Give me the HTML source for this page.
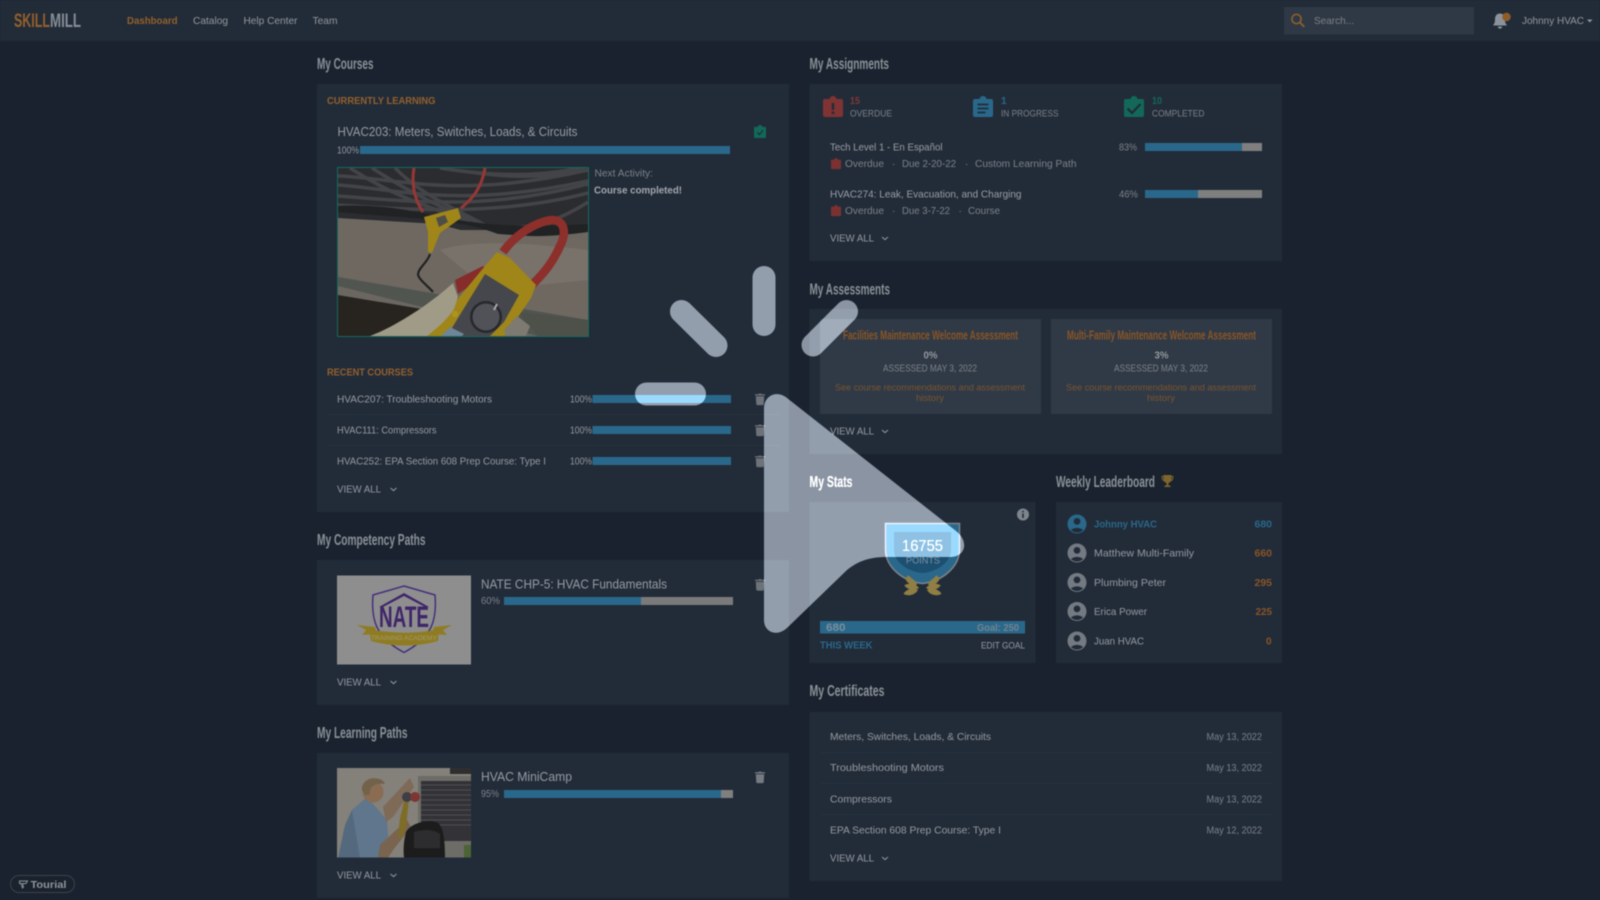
<!DOCTYPE html>
<html lang="en"><head><meta charset="utf-8"><title>SkillMill Dashboard</title>
<style>
html,body{margin:0;padding:0;width:1600px;height:900px;overflow:hidden;background:#19222e}
svg{display:block;filter:blur(.45px)}
text{font-family:"Liberation Sans",Arial,sans-serif;fill:#93989f;font-size:10px;white-space:pre}
.h{font-size:16px;font-weight:700;fill:#8b9198}
.o{font-weight:700;fill:#93602d}
.n{font-size:12.5px;fill:#969ba2}
.t{fill:#969aa1;font-size:10.5px}
.m{fill:#7b8189;font-size:10px}
.a{font-weight:700;font-size:13px;fill:#8a5527}
.l{fill:#7a5330;font-size:9.5px}
.ov{mix-blend-mode:plus-lighter;fill:#717274}
</style></head><body>
<svg width="1600" height="900" viewBox="0 0 1600 900" xmlns="http://www.w3.org/2000/svg">
<defs>
<path id="clip" d="M2 3h4.600a3.400 3 0 0 1 6.800 0H18a2 2 0 0 1 2 2v14a2 2 0 0 1-2 2H2a2 2 0 0 1-2-2V5a2 2 0 0 1 2-2z"/>
<path id="trash" d="M3.500 1.200V.6h3v.6H10v1.300H0V1.200zM.8 3.300h8.400l-.5 8a1 1 0 0 1-1 .8H2.300a1 1 0 0 1-1-.8z"/>
<path id="chev" d="M0 0l3 2.600L6 0" fill="none" stroke="#8a9097" stroke-width="1.100"/>
<g id="user"><circle r="9.500" fill="#747a82"/><circle cy="-2.600" r="3.400" fill="#222c39"/><path d="M-6 6a7.500 5.200 0 0 1 12 0a8.400 8.400 0 0 1-12 0z" fill="#222c39"/></g>
<path id="leaf" d="M0 0c4-4 11-4 15 0c-4 4-11 4-15 0z"/>
<clipPath id="c1"><rect x="338" y="168" width="250" height="168"/></clipPath>
<clipPath id="c2"><rect x="337" y="768" width="134" height="89.500"/></clipPath>
</defs>

<rect width="1600" height="900" fill="#19222e"/>

<!-- Nav -->
<rect width="1600" height="41" fill="#222c38"/>
<text x="14" y="27" textLength="36" lengthAdjust="spacingAndGlyphs" style="font-size:19.500px;font-weight:700;fill:#96602b">SKILL</text>
<text x="50" y="27" textLength="31" lengthAdjust="spacingAndGlyphs" style="font-size:19.500px;font-weight:700;fill:#868d96">MILL</text>
<text x="127" y="24" textLength="50.500" lengthAdjust="spacingAndGlyphs" style="font-size:10.500px;fill:#93602d;font-weight:700">Dashboard</text>
<text x="193" y="24" textLength="35" lengthAdjust="spacingAndGlyphs" style="font-size:10.500px">Catalog</text>
<text x="243.500" y="24" textLength="54" lengthAdjust="spacingAndGlyphs" style="font-size:10.500px">Help Center</text>
<text x="312.500" y="24" textLength="25" lengthAdjust="spacingAndGlyphs" style="font-size:10.500px">Team</text>
<rect x="1284" y="7" width="190" height="27.500" fill="#2f3945"/>
<circle cx="1296.500" cy="19" r="4.600" fill="none" stroke="#93602d" stroke-width="1.500"/><path d="M1300 22.600l3.700 3.700" stroke="#93602d" stroke-width="1.800" stroke-linecap="round"/>
<text x="1314" y="24" textLength="40" lengthAdjust="spacingAndGlyphs" class="m" style="font-size:10.500px">Search...</text>
<path d="M1500 13.500c-3.600 0-5 2.600-5 6c0 3.500-1 4.500-2 6h14c-1-1.500-2-2.500-2-6c0-3.400-1.400-6-5-6zM1497.800 26.500a2.200 2.200 0 0 0 4.400 0z" fill="#8b929a"/>
<circle cx="1506.500" cy="17" r="4.200" fill="#8f5c28"/>
<text x="1522" y="24" textLength="62" lengthAdjust="spacingAndGlyphs" style="font-size:10.500px">Johnny HVAC</text>
<path d="M1587 19.500h5.500l-2.750 3z" fill="#8f959c"/>

<!-- Panels -->
<g fill="#222c39">
<rect x="317" y="84" width="472" height="428"/>
<rect x="317" y="560" width="472" height="145"/>
<rect x="317" y="753" width="472" height="145"/>
<rect x="809.500" y="84" width="472.500" height="177"/>
<rect x="809.500" y="309" width="472.500" height="145"/>
<rect x="809.500" y="502" width="226" height="161"/>
<rect x="1056" y="502" width="226" height="161"/>
<rect x="809.500" y="712" width="472.500" height="169"/>
</g>

<!-- Titles -->
<text class="h" x="317" y="69" textLength="56.500" lengthAdjust="spacingAndGlyphs">My Courses</text>
<text class="h" x="809.500" y="69" textLength="79.500" lengthAdjust="spacingAndGlyphs">My Assignments</text>
<text class="h" x="809.500" y="294.500" textLength="80.500" lengthAdjust="spacingAndGlyphs">My Assessments</text>
<text class="h" x="809.500" y="487" textLength="43" lengthAdjust="spacingAndGlyphs" style="fill:#fff">My Stats</text>
<text class="h" x="1056" y="487" textLength="99" lengthAdjust="spacingAndGlyphs">Weekly Leaderboard</text>
<text class="h" x="809.500" y="696" textLength="75" lengthAdjust="spacingAndGlyphs">My Certificates</text>
<text class="h" x="317" y="545" textLength="108.500" lengthAdjust="spacingAndGlyphs">My Competency Paths</text>
<text class="h" x="317" y="738" textLength="90.500" lengthAdjust="spacingAndGlyphs">My Learning Paths</text>
<path d="M1163.500 475h8v3.500c0 2.500-1.200 4-3 4.500v2.500h2v1.500h-6v-1.500h2V483c-1.800-.5-3-2-3-4.500z" fill="#7d652d"/>
<path d="M1163.500 476.500h-1.500c0 2.500 1 4 2.500 4.500M1171.500 476.500h1.500c0 2.500-1 4-2.500 4.500" fill="none" stroke="#7d652d"/>

<!-- My Courses -->
<text class="o" x="327" y="104" textLength="108.500" lengthAdjust="spacingAndGlyphs">CURRENTLY LEARNING</text>
<text class="n" x="337.500" y="136" textLength="240" lengthAdjust="spacingAndGlyphs">HVAC203: Meters, Switches, Loads, &amp; Circuits</text>
<g transform="translate(754,125) scale(.6,.62)"><use href="#clip" fill="#12695a"/><path d="M5.500 12l3.500 3.500l6-7" fill="none" stroke="#222c39" stroke-width="2"/></g>
<text x="337" y="153.500" textLength="22" lengthAdjust="spacingAndGlyphs">100%</text>
<rect x="360" y="146" width="370" height="8" fill="#29688b"/>

<!-- photo meter -->
<g clip-path="url(#c1)">
<rect x="338" y="168" width="250" height="168" fill="#6c6660"/>
<rect x="338" y="168" width="250" height="62" fill="#2b2c2f"/>
<g fill="none" stroke="#434448" stroke-width="3.500">
<path d="M338 176c60 2 120 24 250-6"/><path d="M338 185c60 4 120 24 250-4"/><path d="M338 196c80 6 150 14 250-12"/><path d="M338 205c60 4 160 12 250-12"/><path d="M350 168c40 26 70 36 120 54"/><path d="M372 168c40 26 70 40 110 56"/><path d="M395 168c30 30 60 40 95 60"/><path d="M490 226c40 6 70-6 98-24"/><path d="M440 168c50 8 100 10 148-2"/><path d="M470 172c40 6 80 6 118-2"/>
</g>
<path d="M338 212c60 6 120 6 160 22c30 4 60 2 90-2v-8c-60 4-110 2-160-10c-30-6-60-10-90-8z" fill="#212224"/>
<path d="M338 218l100 6l30 8l120 8v80l-250-44z" fill="#6e6861"/>
<path d="M440 250c30-10 80-8 148 0v30l-100 10z" fill="#78726a"/>
<path d="M338 286v-9l250 43v16h-50z" fill="#515550"/>
<path d="M338 295l120 20l-60 21h-60z" fill="#272420"/>
<path d="M588 320v16h-50l-20-24z" fill="#4e504a"/>
<g fill="none">
<path d="M414 168c-3 18 1 32 9 44" stroke="#973736" stroke-width="3"/>
<path d="M485 168c-3 18-11 30-24 40" stroke="#973736" stroke-width="3"/>
<path d="M430 254c-2 8-11 13-12 20c0 5 10 12 15 18" stroke="#222" stroke-width="2.200"/>
<path d="M503 252C515 235 535 222 552 220C566 220 566 235 560 246C553 262 545 272 532 285" stroke="#8d2f2b" stroke-width="8.500"/>
</g>
<path d="M424 217l34-9l3 10l-21 15l-8 20l-4-1l0-20z" fill="#a08519"/>
<path d="M436 218l9-3l3 7l-9 5z" fill="#4e4e49"/>
<path d="M455 280l28-14l7 6l-32 22z" fill="#862c2a"/>
<path d="M427 336L485 266L497 252L510 258L536 285L531 298L505 336z" fill="#a08519"/>
<path d="M447 336L485 274L519 295L504 322L490 336z" fill="#45474c"/>
<circle cx="486" cy="317" r="16" fill="#26282c"/><circle cx="486" cy="317" r="13.500" fill="#505257"/>
<path d="M494 310l3-6" stroke="#a8a8a8" stroke-width="2"/>
<circle cx="455" cy="314" r="3.200" fill="#ad9421"/>
<path d="M441 336l9-9l14 7l-2 2z" fill="#6d8698"/>
<path d="M370 336c22-8 58-30 83-53l5 14l-4 12c-8 12-18 20-27 27z" fill="#a09b86"/>
<path d="M517 316l13 10l-4 10h-20l-2-6z" fill="#7e7a71"/>
</g>
<rect x="337.500" y="167.500" width="251" height="169" fill="none" stroke="#156a5b"/>

<text class="m" x="594.500" y="176.500" textLength="58.500" lengthAdjust="spacingAndGlyphs">Next Activity:</text>
<text x="594" y="193.500" textLength="88" lengthAdjust="spacingAndGlyphs" style="font-weight:700;fill:#a3a7ad">Course completed!</text>

<text class="o" x="327" y="375.500" textLength="86" lengthAdjust="spacingAndGlyphs">RECENT COURSES</text>
<text class="t" x="337" y="402.500" textLength="155" lengthAdjust="spacingAndGlyphs">HVAC207: Troubleshooting Motors</text>
<text class="t" x="337" y="433.500" textLength="99.500" lengthAdjust="spacingAndGlyphs">HVAC111: Compressors</text>
<text class="t" x="337" y="464.500" textLength="209" lengthAdjust="spacingAndGlyphs">HVAC252: EPA Section 608 Prep Course: Type I</text>
<g>
<text x="570" y="402.500" textLength="22" lengthAdjust="spacingAndGlyphs">100%</text>
<text x="570" y="433.500" textLength="22" lengthAdjust="spacingAndGlyphs">100%</text>
<text x="570" y="464.500" textLength="22" lengthAdjust="spacingAndGlyphs">100%</text>
</g>
<g fill="#29688b"><rect x="592.500" y="395" width="138.500" height="8"/><rect x="592.500" y="426" width="138.500" height="8"/><rect x="592.500" y="457" width="138.500" height="8"/></g>
<g stroke="#28323f"><path d="M327 414.500h452M327 445.500h452"/></g>
<g fill="#6e737a"><use href="#trash" x="755" y="393"/><use href="#trash" x="755" y="424"/><use href="#trash" x="755" y="455"/><use href="#trash" x="755" y="578.500"/></g>
<use href="#trash" x="755" y="771" fill="#767b82"/>
<text class="t" x="337" y="492.500" textLength="44" lengthAdjust="spacingAndGlyphs">VIEW ALL</text><use href="#chev" x="390.500" y="488"/>

<!-- NATE -->
<rect x="337" y="575.500" width="134" height="89" fill="#8e8e8f"/>
<path d="M404 586l31 9c2 24-2 42-31 57.500c-29-15.500-33-33.500-31-57.500z" fill="none" stroke="#45307a" stroke-width="1.500"/>
<path d="M404 593l-25 14h4l21-11l21 11h4z" fill="#3f2569"/>
<text x="379" y="627" textLength="50" lengthAdjust="spacingAndGlyphs" style="font-size:30px;font-weight:700;fill:#3f2569">NATE</text>
<path d="M357 625l18 2l2 7l-15 1l4-5zM452 625l-18 2l-2 7l15 1l-4-5z" fill="#8f7c22"/>
<path d="M369 629c22 5 48 5 70 0l-1 12c-20 6-46 6-67 0z" fill="#8f7c22"/>
<text x="371" y="640" textLength="66" lengthAdjust="spacingAndGlyphs" style="font-size:6.500px;fill:#9f9a70">TRAINING ACADEMY</text>

<text class="n" x="481" y="588.500" textLength="186" lengthAdjust="spacingAndGlyphs">NATE CHP-5: HVAC Fundamentals</text>
<text class="m" x="481" y="604" textLength="19" lengthAdjust="spacingAndGlyphs">60%</text>
<rect x="504" y="597" width="229" height="8" fill="#7a7a7a"/><rect x="504" y="597" width="137" height="8" fill="#29688b"/>
<text class="t" x="337" y="685.500" textLength="44" lengthAdjust="spacingAndGlyphs">VIEW ALL</text><use href="#chev" x="390.500" y="681"/>

<!-- MiniCamp photo -->
<g clip-path="url(#c2)">
<rect x="337" y="768" width="134" height="90" fill="#84807a"/>
<rect x="450" y="768" width="21" height="6" fill="#2e2e2e"/>
<rect x="418" y="776" width="53" height="82" fill="#6d6c66"/>
<rect x="421" y="781" width="50" height="60" fill="#333337"/>
<g stroke="#505055" stroke-width="1"><path d="M421 785h50M421 790h50M421 795h50M421 800h50M421 805h50M421 810h50M421 815h50M421 820h50M421 825h50"/></g>
<path d="M338 858L352 810L367 797L387 820L389 850L382 858z" fill="#5f768c"/>
<path d="M338 858L345 825L352 810L360 858z" fill="#54697e"/>
<path d="M383 807L410 778L414 787L393 817L386 822z" fill="#7f6a58"/>
<path d="M380 845L407 820L411 827L393 850L388 858L378 858z" fill="#78644f"/>
<circle cx="373" cy="792" r="10.500" fill="#8a6c52"/>
<path d="M362 790c-1-8 8-14 17-11c4 1 5 3 6 5c-8-1-12 1-14 4l-2 7h-4z" fill="#73624a"/>
<path d="M400 818l5-20l4 1l-3 28l-5 12l-3-2z" fill="#7d6d27"/>
<circle cx="407" cy="797" r="5" fill="#3c3f46"/><circle cx="415" cy="797" r="5" fill="#7d3632"/>
<path d="M406 832c4-8 20-13 30-10c7 2 9 16 9 36h-41c-1-10 0-18 2-26z" fill="#1c1c1d"/>
<path d="M414 832c8-3 20-3 26 2v14h-26z" fill="#2d2d2f"/>
<rect x="464" y="845" width="7" height="13" fill="#4c6335"/>
</g>

<text class="n" x="481" y="781" textLength="91" lengthAdjust="spacingAndGlyphs">HVAC MiniCamp</text>
<text class="m" x="481" y="797" textLength="18" lengthAdjust="spacingAndGlyphs">95%</text>
<rect x="504" y="790" width="229" height="8" fill="#7f7f7f"/><rect x="504" y="790" width="217" height="8" fill="#29688b"/>
<text class="t" x="337" y="878.500" textLength="44" lengthAdjust="spacingAndGlyphs">VIEW ALL</text><use href="#chev" x="390.500" y="874"/>

<!-- Assignments -->
<g transform="translate(823,96)"><use href="#clip" fill="#7f3332"/><rect x="8.800" y="7" width="2.400" height="7" fill="#222c39"/><rect x="8.800" y="15.500" width="2.400" height="2.500" fill="#222c39"/></g>
<g transform="translate(973,96)"><use href="#clip" fill="#29688b"/><path d="M4.500 8.500h11M4.500 12.500h11M4.500 16.500h8" stroke="#222c39" stroke-width="1.800"/></g>
<g transform="translate(1124,96)"><use href="#clip" fill="#12695a"/><path d="M3.500 12.500l4.500 4.500l8.500-9" fill="none" stroke="#222c39" stroke-width="2.300"/></g>
<text x="850" y="104" textLength="10" lengthAdjust="spacingAndGlyphs" style="fill:#7f3734;font-weight:700">15</text>
<text x="1001" y="104" style="fill:#29688b;font-weight:700">1</text>
<text x="1152" y="104" textLength="10" lengthAdjust="spacingAndGlyphs" style="fill:#12695a;font-weight:700">10</text>
<text class="m" x="850" y="116.500" textLength="42" lengthAdjust="spacingAndGlyphs" style="font-size:9.500px">OVERDUE</text>
<text class="m" x="1001" y="116.500" textLength="57.500" lengthAdjust="spacingAndGlyphs" style="font-size:9.500px">IN PROGRESS</text>
<text class="m" x="1152" y="116.500" textLength="52.500" lengthAdjust="spacingAndGlyphs" style="font-size:9.500px">COMPLETED</text>

<text x="830" y="150.500" textLength="112.500" lengthAdjust="spacingAndGlyphs" style="font-size:10.500px;fill:#9a9ea5">Tech Level 1 - En Español</text>
<text class="m" x="1119" y="150.500" textLength="18" lengthAdjust="spacingAndGlyphs">83%</text>
<rect x="1145" y="143" width="117" height="8" fill="#7f7f7f"/><rect x="1145" y="143" width="97" height="8" fill="#29688b"/>
<g transform="translate(831,158) scale(.5,.53)"><use href="#clip" fill="#7a3130"/></g>
<text class="m" x="845" y="167" textLength="39" lengthAdjust="spacingAndGlyphs">Overdue</text>
<text class="m" x="892" y="167">·</text>
<text class="m" x="902" y="167" textLength="54" lengthAdjust="spacingAndGlyphs">Due 2-20-22</text>
<text class="m" x="965" y="167">·</text>
<text class="m" x="975" y="167" textLength="101.500" lengthAdjust="spacingAndGlyphs">Custom Learning Path</text>

<text x="830" y="197.500" textLength="191.500" lengthAdjust="spacingAndGlyphs" style="font-size:10.500px;fill:#9a9ea5">HVAC274: Leak, Evacuation, and Charging</text>
<text class="m" x="1119" y="197.500" textLength="19" lengthAdjust="spacingAndGlyphs">46%</text>
<rect x="1145" y="190" width="117" height="8" fill="#7f7f7f"/><rect x="1145" y="190" width="53" height="8" fill="#29688b"/>
<g transform="translate(831,205) scale(.5,.53)"><use href="#clip" fill="#7a3130"/></g>
<text class="m" x="845" y="214" textLength="39" lengthAdjust="spacingAndGlyphs">Overdue</text>
<text class="m" x="892" y="214">·</text>
<text class="m" x="902" y="214" textLength="48" lengthAdjust="spacingAndGlyphs">Due 3-7-22</text>
<text class="m" x="958.500" y="214">·</text>
<text class="m" x="968" y="214" textLength="32" lengthAdjust="spacingAndGlyphs">Course</text>
<text class="t" x="830" y="241.500" textLength="44" lengthAdjust="spacingAndGlyphs">VIEW ALL</text><use href="#chev" x="882" y="237"/>

<!-- Assessments -->
<rect x="820" y="319" width="221" height="95" fill="#303a46"/><rect x="1051" y="319" width="221" height="95" fill="#303a46"/>
<text class="a" x="843" y="339.500" textLength="175" lengthAdjust="spacingAndGlyphs">Facilities Maintenance Welcome Assessment</text>
<text class="a" x="1067" y="339.500" textLength="189" lengthAdjust="spacingAndGlyphs">Multi-Family Maintenance Welcome Assessment</text>
<text x="923.500" y="358.500" textLength="14" lengthAdjust="spacingAndGlyphs" style="font-weight:700">0%</text>
<text x="1154.500" y="358.500" textLength="14" lengthAdjust="spacingAndGlyphs" style="font-weight:700">3%</text>
<text class="m" x="883" y="371.500" textLength="94" lengthAdjust="spacingAndGlyphs">ASSESSED MAY 3, 2022</text>
<text class="m" x="1114" y="371.500" textLength="94" lengthAdjust="spacingAndGlyphs">ASSESSED MAY 3, 2022</text>
<text class="l" x="835" y="390.500" textLength="190" lengthAdjust="spacingAndGlyphs">See course recommendations and assessment</text>
<text class="l" x="916" y="401" textLength="28" lengthAdjust="spacingAndGlyphs">history</text>
<text class="l" x="1066" y="390.500" textLength="190" lengthAdjust="spacingAndGlyphs">See course recommendations and assessment</text>
<text class="l" x="1147" y="401" textLength="28" lengthAdjust="spacingAndGlyphs">history</text>
<text class="t" x="830" y="434.500" textLength="44" lengthAdjust="spacingAndGlyphs">VIEW ALL</text><use href="#chev" x="882" y="430"/>

<!-- Stats -->
<circle cx="1023" cy="514.500" r="6" fill="#7e858d"/><rect x="1022.200" y="513.500" width="1.600" height="4.500" fill="#222c39"/><rect x="1022.200" y="510.800" width="1.600" height="1.600" fill="#222c39"/>
<path d="M885.500 523.500h74v26c0 18-18 32-37 34c-19-2-37-16-37-34z" fill="#29688b" stroke="#7d828a" stroke-width="1.500"/>
<path d="M894 532h57v18c0 12-14 22-28.500 23c-14.500-1-28.500-11-28.500-23z" fill="#1d4f70"/>
<g fill="#8f7f44">
<use href="#leaf" transform="translate(919,588) rotate(190)"/><use href="#leaf" transform="translate(917,585) rotate(212) scale(.95)"/><use href="#leaf" transform="translate(912,583) rotate(240) scale(.6)"/><use href="#leaf" transform="translate(918,590) rotate(165) scale(1)"/>
<use href="#leaf" transform="translate(926,588) rotate(-10)"/><use href="#leaf" transform="translate(928,585) rotate(-32) scale(.95)"/><use href="#leaf" transform="translate(933,583) rotate(-60) scale(.6)"/><use href="#leaf" transform="translate(927,590) rotate(15) scale(1)"/>
</g>
<text x="902" y="551" textLength="41" lengthAdjust="spacingAndGlyphs" style="font-size:15.500px;fill:#fff">16755</text>
<text x="906" y="563.500" textLength="34" lengthAdjust="spacingAndGlyphs" style="font-size:9.500px;fill:#7c93a6">POINTS</text>
<rect x="820" y="621" width="205" height="12.500" fill="#29688b"/>
<text x="826" y="631" textLength="19.500" lengthAdjust="spacingAndGlyphs" style="font-size:11px;font-weight:700;fill:#7c8e9c">680</text>
<text x="977" y="631" textLength="42" lengthAdjust="spacingAndGlyphs" style="font-weight:700;fill:#75828e">Goal: 250</text>
<text x="820" y="648.500" textLength="52.500" lengthAdjust="spacingAndGlyphs" style="font-weight:700;fill:#29688b">THIS WEEK</text>
<text x="981" y="648.500" textLength="44" lengthAdjust="spacingAndGlyphs" style="fill:#969ba2;font-size:9.500px">EDIT GOAL</text>

<!-- Leaderboard -->
<circle cx="1077" cy="524" r="9.500" fill="#29688b"/><circle cx="1077" cy="521.400" r="3.400" fill="#222c39"/><path d="M1071 530a7.500 5.200 0 0 1 12 0a8.400 8.400 0 0 1-12 0z" fill="#222c39"/>
<use href="#user" x="1077" y="553"/><use href="#user" x="1077" y="582.500"/><use href="#user" x="1077" y="611.500"/><use href="#user" x="1077" y="641"/>
<text x="1094" y="527.500" textLength="63" lengthAdjust="spacingAndGlyphs" style="fill:#29688b;font-weight:700">Johnny HVAC</text>
<text class="t" x="1094" y="556.500" textLength="100" lengthAdjust="spacingAndGlyphs">Matthew Multi-Family</text>
<text class="t" x="1094" y="586" textLength="72" lengthAdjust="spacingAndGlyphs">Plumbing Peter</text>
<text class="t" x="1094" y="615" textLength="53" lengthAdjust="spacingAndGlyphs">Erica Power</text>
<text class="t" x="1094" y="644.500" textLength="50" lengthAdjust="spacingAndGlyphs">Juan HVAC</text>
<text x="1254.500" y="527.500" textLength="17.500" lengthAdjust="spacingAndGlyphs" style="fill:#29688b;font-weight:700">680</text>
<text x="1254.500" y="556.500" textLength="17.500" lengthAdjust="spacingAndGlyphs" style="fill:#8a5527;font-weight:700">660</text>
<text x="1254.500" y="586" textLength="17.500" lengthAdjust="spacingAndGlyphs" style="fill:#8a5527;font-weight:700">295</text>
<text x="1255.500" y="615" textLength="16.500" lengthAdjust="spacingAndGlyphs" style="fill:#8a5527;font-weight:700">225</text>
<text x="1266" y="644.500" style="fill:#8a5527;font-weight:700">0</text>

<!-- Certificates -->
<text class="t" x="830" y="740" textLength="161" lengthAdjust="spacingAndGlyphs">Meters, Switches, Loads, &amp; Circuits</text>
<text class="t" x="830" y="771" textLength="114" lengthAdjust="spacingAndGlyphs">Troubleshooting Motors</text>
<text class="t" x="830" y="802.500" textLength="62" lengthAdjust="spacingAndGlyphs">Compressors</text>
<text class="t" x="830" y="833.500" textLength="171" lengthAdjust="spacingAndGlyphs">EPA Section 608 Prep Course: Type I</text>
<text class="m" x="1206.500" y="740" textLength="55.500" lengthAdjust="spacingAndGlyphs">May 13, 2022</text>
<text class="m" x="1206.500" y="771" textLength="55.500" lengthAdjust="spacingAndGlyphs">May 13, 2022</text>
<text class="m" x="1206.500" y="802.500" textLength="55.500" lengthAdjust="spacingAndGlyphs">May 13, 2022</text>
<text class="m" x="1206.500" y="833.500" textLength="55.500" lengthAdjust="spacingAndGlyphs">May 12, 2022</text>
<g stroke="#28323f"><path d="M821 752.500h451M821 783.500h451M821 814.500h451"/></g>
<text class="t" x="830" y="861.500" textLength="44" lengthAdjust="spacingAndGlyphs">VIEW ALL</text><use href="#chev" x="882" y="857"/>

<!-- Tourial -->
<rect x="10.500" y="875.500" width="64" height="17" rx="8.500" fill="#1a222d" stroke="#3a424d"/>
<path d="M19.500 881h8l-1.500 2.500h-3.500l1 3.500l-1 1l-1.500-4.500h-1.500z" fill="none" stroke="#8f959c" stroke-width="1"/>
<text x="30.500" y="888" textLength="36" lengthAdjust="spacingAndGlyphs" style="font-size:10.500px;font-weight:700;fill:#8f959c">Tourial</text>

<!-- Loader overlay -->
<g class="ov">
<rect x="752.500" y="266" width="23" height="70" rx="11.500"/>
<rect x="635" y="382.500" width="71" height="23" rx="11.500"/>
<path d="M681.500 311.500L716 345.500" fill="none" stroke="#717274" stroke-width="23" stroke-linecap="round" style="mix-blend-mode:plus-lighter"/>
<path d="M846.500 311.500L813 345" fill="none" stroke="#717274" stroke-width="23" stroke-linecap="round" style="mix-blend-mode:plus-lighter"/>
<path d="M764 409C764 395 777 390 787 398L956 531C969 541 966 557 950 557H886C870 557 858 561 847 570L788 627C777 638 764 632 764 620Z"/>
</g>
</svg>
</body></html>
